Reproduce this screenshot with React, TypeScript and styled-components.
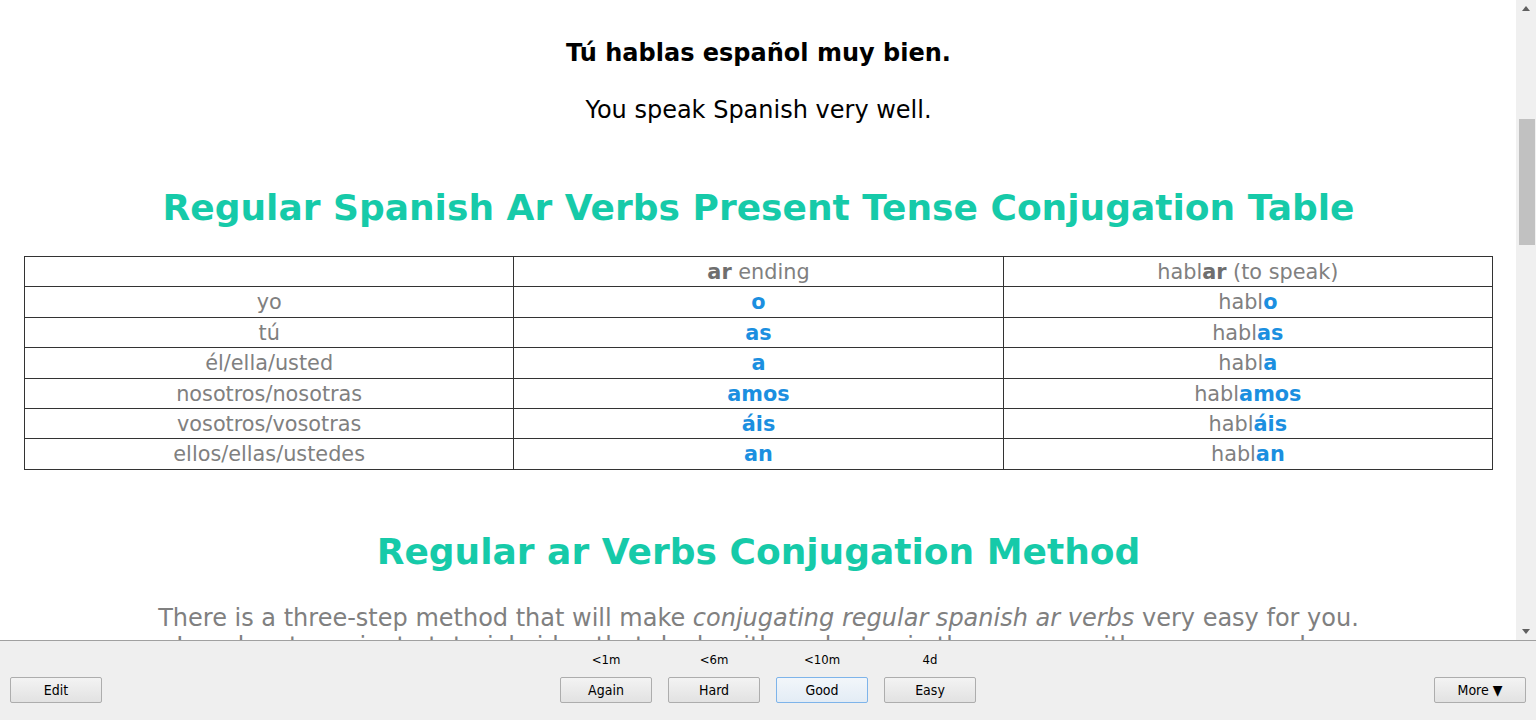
import React from "react";
import styled, { createGlobalStyle } from "styled-components";

const Global = createGlobalStyle`
  html, body { margin: 0; padding: 0; height: 100%; overflow: hidden; background: #fff; }
  #root { height: 100%; }
`;

const Screen = styled.div`
  height: 720px;
  display: flex;
  flex-direction: column;
`;

const Main = styled.div`
  height: 640px;
  display: flex;
  flex-direction: row;
  overflow: hidden;
`;

const Card = styled.div`
  flex: 1;
  overflow: hidden;
  padding: 39px 23px 0 24px;
  font-family: "DejaVu Sans", Verdana, sans-serif;
  text-align: center;
  color: #000;
`;

const Question = styled.div`
  font-size: 24px;
  line-height: 28px;
  font-weight: bold;
`;

const Answer = styled.div`
  font-size: 24px;
  line-height: 28px;
  margin-top: 29px;
`;

const Heading = styled.h2<{ $top: number }>`
  margin: ${(p) => p.$top}px 0 0;
  font-size: 36px;
  line-height: 43px;
  font-weight: bold;
  color: #16caa9;
`;

const Table = styled.table`
  width: 100%;
  margin-top: 27.5px;
  border-collapse: collapse;
  table-layout: fixed;
  color: #808080;
  font-size: 20.8px;
`;

const Cell = styled.td`
  border: 1px solid #333;
  padding: 4px 0 2px;
  line-height: 23.4px;
  text-align: center;
`;

const Ending = styled.b`
  color: #1b8fe0;
`;

const Stem = styled.b`
  color: #6e6e6e;
`;

const Para = styled.p`
  margin: 30.5px 0 0;
  font-size: 24px;
  line-height: 28px;
  color: #808080;
`;

const ScrollTrack = styled.div`
  width: 20px;
  background: #f0f0f0;
  position: relative;
  display: flex;
  flex-direction: column;
  align-items: center;
`;

const Arrow = styled.div<{ $down?: boolean }>`
  height: 17px;
  width: 100%;
  display: flex;
  align-items: center;
  justify-content: center;
  ${(p) => (p.$down ? "margin-top: auto;" : "")}
`;

const Thumb = styled.div`
  position: absolute;
  left: 3px;
  right: 1px;
  top: 119px;
  height: 126px;
  background: #c1c1c1;
`;

const Bar = styled.div`
  height: 80px;
  box-sizing: border-box;
  border-top: 1px solid #a0a0a0;
  background: #efefef;
  display: grid;
  grid-template-columns: 1fr auto 1fr;
  align-items: end;
  padding: 0 10px 17px;
  font-family: "DejaVu Sans Condensed", "Liberation Sans Narrow", "Noto Sans", sans-serif;
  font-size: 13px;
`;

const Center = styled.div`
  display: flex;
  gap: 16px;
`;

const Ease = styled.div`
  display: flex;
  flex-direction: column;
  align-items: center;
  gap: 9px;
`;

const Time = styled.span`
  font-size: 13px;
  line-height: 16px;
  color: #000;
`;

const Btn = styled.button<{ $focus?: boolean }>`
  width: 92px;
  height: 26px;
  padding: 0;
  font-family: inherit;
  font-size: 14px;
  color: #000;
  border: 1px solid ${(p) => (p.$focus ? "#7eb4ea" : "#adadad")};
  border-radius: 2px;
  background: ${(p) =>
    p.$focus
      ? "linear-gradient(#f2f6fa, #e3ecf5)"
      : "linear-gradient(#f3f3f3, #e2e2e2)"};
`;

const Left = styled.div`
  justify-self: start;
`;
const Right = styled.div`
  justify-self: end;
`;

const rows: [string, string][] = [
  ["yo", "o"],
  ["tú", "as"],
  ["él/ella/usted", "a"],
  ["nosotros/nosotras", "amos"],
  ["vosotros/vosotras", "áis"],
  ["ellos/ellas/ustedes", "an"],
];

const eases = [
  ["<1m", "Again"],
  ["<6m", "Hard"],
  ["<10m", "Good"],
  ["4d", "Easy"],
];

export default function App() {
  return (
    <Screen>
      <Global />
      <Main>
        <Card>
          <Question>Tú hablas español muy bien.</Question>
          <Answer>You speak Spanish very well.</Answer>
          <Heading $top={61.5}>Regular Spanish Ar Verbs Present Tense Conjugation Table</Heading>
          <Table>
            <tbody>
              <tr>
                <Cell></Cell>
                <Cell>
                  <Stem>ar</Stem> ending
                </Cell>
                <Cell>
                  habl<Stem>ar</Stem> (to speak)
                </Cell>
              </tr>
              {rows.map(([p, e]) => (
                <tr key={p}>
                  <Cell>{p}</Cell>
                  <Cell>
                    <Ending>{e}</Ending>
                  </Cell>
                  <Cell>
                    habl<Ending>{e}</Ending>
                  </Cell>
                </tr>
              ))}
            </tbody>
          </Table>
          <Heading $top={60.5}>Regular ar Verbs Conjugation Method</Heading>
          <Para>
            There is a three-step method that will make <i>conjugating regular spanish ar verbs</i> very easy for you.
            <br />
            I made a ten minute tutorial video that deals with each step in the process with many examples.
          </Para>
        </Card>
        <ScrollTrack>
          <Arrow>
            <svg width="8" height="5" viewBox="0 0 8 5">
              <path d="M0 5 L4 0 L8 5 Z" fill="#606060" />
            </svg>
          </Arrow>
          <Thumb />
          <Arrow $down>
            <svg width="8" height="5" viewBox="0 0 8 5">
              <path d="M0 0 L4 5 L8 0 Z" fill="#606060" />
            </svg>
          </Arrow>
        </ScrollTrack>
      </Main>
      <Bar>
        <Left>
          <Btn>Edit</Btn>
        </Left>
        <Center>
          {eases.map(([t, l]) => (
            <Ease key={l}>
              <Time>{t}</Time>
              <Btn $focus={l === "Good"}>{l}</Btn>
            </Ease>
          ))}
        </Center>
        <Right>
          <Btn>More ▼</Btn>
        </Right>
      </Bar>
    </Screen>
  );
}
